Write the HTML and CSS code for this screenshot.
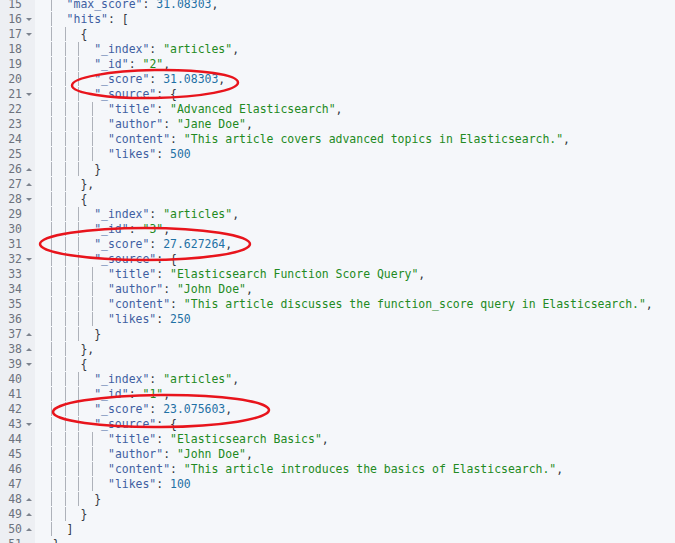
FILE: index.html
```html
<!DOCTYPE html>
<html lang="en">
<head>
    <meta charset="UTF-8">
    <title>Console Response</title>
    <link rel="stylesheet" href="styles.css">
</head>
<body>
    <div class="editor">
        <div class="lines" id="lines"></div>
        <svg class="marks" width="675" height="543" viewBox="0 0 675 543">
            <ellipse cx="155" cy="84" rx="83" ry="14" transform="rotate(-1 155 84)"></ellipse>
            <ellipse cx="145" cy="244" rx="105" ry="16"></ellipse>
            <ellipse cx="161" cy="411" rx="108" ry="16" transform="rotate(-0.5 161 411)"></ellipse>
        </svg>
    </div>

    <script>
        const source = [
            '    "max_score": 31.08303,',
            '    "hits": [',
            '      {',
            '        "_index": "articles",',
            '        "_id": "2",',
            '        "_score": 31.08303,',
            '        "_source": {',
            '          "title": "Advanced Elasticsearch",',
            '          "author": "Jane Doe",',
            '          "content": "This article covers advanced topics in Elasticsearch.",',
            '          "likes": 500',
            '        }',
            '      },',
            '      {',
            '        "_index": "articles",',
            '        "_id": "3",',
            '        "_score": 27.627264,',
            '        "_source": {',
            '          "title": "Elasticsearch Function Score Query",',
            '          "author": "John Doe",',
            '          "content": "This article discusses the function_score query in Elasticsearch.",',
            '          "likes": 250',
            '        }',
            '      },',
            '      {',
            '        "_index": "articles",',
            '        "_id": "1",',
            '        "_score": 23.075603,',
            '        "_source": {',
            '          "title": "Elasticsearch Basics",',
            '          "author": "John Doe",',
            '          "content": "This article introduces the basics of Elasticsearch.",',
            '          "likes": 100',
            '        }',
            '      }',
            '    ]',
            '  }'
        ];
        const firstLine = 15;
        const folds = {
            16: 'open', 17: 'open', 21: 'open', 26: 'close', 27: 'close',
            28: 'open', 32: 'open', 37: 'close', 38: 'close', 39: 'open',
            43: 'open', 48: 'close', 49: 'close', 50: 'close', 51: 'close'
        };

        const linesEl = document.getElementById('lines');
        const tokenRe = /("(?:[^"\\]|\\.)*")(?=\s*:)|("(?:[^"\\]|\\.)*")|(-?\d+(?:\.\d+)?)|([{}\[\],:])|(\s+)/g;

        function span(cls, text) {
            const el = document.createElement('span');
            el.className = cls;
            el.textContent = text;
            return el;
        }

        source.forEach((text, i) => {
            const num = firstLine + i;
            const row = document.createElement('div');
            row.className = 'line';

            const gutter = document.createElement('div');
            gutter.className = 'gutter';
            gutter.appendChild(span('num', num));
            gutter.appendChild(span('fold ' + (folds[num] || ''), ''));
            row.appendChild(gutter);

            const code = document.createElement('div');
            code.className = 'code';
            const indent = text.match(/^ */)[0].length;
            const chunks = indent / 2;
            for (let c = 0; c < chunks; c++) {
                code.appendChild(span(c < chunks - 1 ? 'ind guide' : 'ind', '  '));
            }
            const rest = text.slice(indent);
            let m;
            tokenRe.lastIndex = 0;
            while ((m = tokenRe.exec(rest)) !== null) {
                if (m[1]) code.appendChild(span('key', m[1]));
                else if (m[2]) code.appendChild(span('str', m[2]));
                else if (m[3]) code.appendChild(span('num-val', m[3]));
                else if (m[4]) code.appendChild(span('punct', m[4]));
                else code.appendChild(document.createTextNode(m[5]));
            }
            row.appendChild(code);
            linesEl.appendChild(row);
        });
    </script>
</body>
</html>
```

FILE: styles.css
```css
/* Editor */
body {
    margin: 0;
    background-color: #f5f7fa;
    font-family: "DejaVu Sans Mono", monospace;
    font-size: 11.46px;
    overflow: hidden;
}
.editor {
    position: relative;
    height: 543px;
    overflow: hidden;
}
.lines {
    margin-top: -3px;
}
.line {
    display: flex;
    height: 15px;
    line-height: 15px;
}
.gutter {
    flex: none;
    width: 35px;
    display: flex;
    align-items: center;
    background-color: #edeff3;
    color: #6c727d;
}
.num {
    width: 22px;
    text-align: right;
}
.fold {
    width: 13px;
    height: 15px;
    display: flex;
    align-items: center;
    justify-content: center;
}
.fold.open::before,
.fold.close::before {
    content: "";
    border-left: 3px solid transparent;
    border-right: 3px solid transparent;
}
.fold.open::before {
    border-top: 3px solid #7d838e;
}
.fold.close::before {
    border-bottom: 3px solid #7d838e;
}
.code {
    padding-left: 4px;
    white-space: pre;
    color: #343741;
}
.ind.guide {
    background-image: linear-gradient(#aeb2ba, #aeb2ba);
    background-repeat: no-repeat;
    background-size: 1px 100%;
    background-position: calc(2ch - 2px) 0;
}
.key {
    color: #3f5fa2;
}
.str {
    color: #228a22;
}
.num-val {
    color: #1f71a5;
}
.punct {
    color: #343741;
}

/* Red marker circles */
.marks {
    position: absolute;
    top: 0;
    left: 0;
    pointer-events: none;
}
.marks ellipse {
    fill: none;
    stroke: #e8141c;
    stroke-width: 2.5;
}
```
